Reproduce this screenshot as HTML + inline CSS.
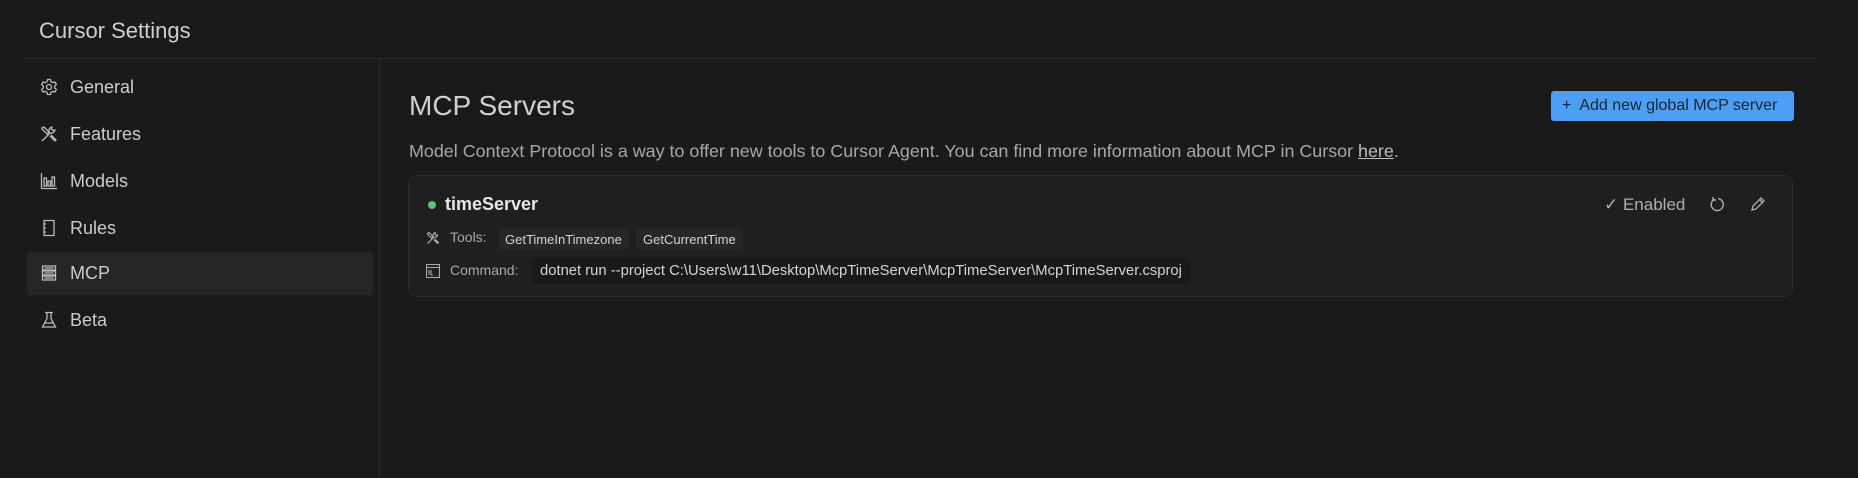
<!DOCTYPE html>
<html><head><meta charset="utf-8"><style>
*{margin:0;padding:0;box-sizing:border-box}
body{width:1858px;height:478px;background:#1a1a1a;font-family:"Liberation Sans",sans-serif;color:#cccccc;position:relative;overflow:hidden}
.abs{position:absolute;white-space:nowrap}
.title{left:39px;top:18px;font-size:22px;color:#cfcfcf}
.hline{left:21px;top:58px;width:1798px;height:1px;background:#2b2b2b}
.vline{left:379px;top:59px;width:1px;height:419px;background:#2b2b2b}
.nav{left:27px;width:346px;height:43px}
.nav.sel{background:#262626;border-radius:4px}
.nav svg{position:absolute;left:13px;top:12px}
.nav span{position:absolute;left:43px;top:11px;font-size:18px;color:#cccccc}
.h1{left:409px;top:90px;font-size:28px;color:#d0d0d0}
.desc{left:409px;top:141px;font-size:17.9px;color:#a8a8a8}
.desc u{color:#bdbdbd}
.btn{left:1551px;top:91px;width:243px;height:30px;background:#4d9ff5;border-radius:3px;color:#1c2430;font-size:16px;padding:6px 0 0 11px}
.card{left:408px;top:175px;width:1385px;height:122px;background:#1f1f1f;border:1px solid #2c2c2c;border-radius:8px}
.chip{background:#262626;border-radius:4px;font-size:13px;color:#d4d4d4;padding:4px 7px;height:22px}
</style></head><body>
<div class="abs title">Cursor Settings</div>
<div class="abs hline"></div>
<div class="abs vline"></div>

<div class="abs nav" style="top:66px"><svg width="18" height="18" viewBox="0 0 18 18" fill="none" stroke="#bbb" stroke-width="1.3"><circle cx="9" cy="9" r="2.5"/><path d="M7.5 1.5h3l.5 2.2 1.8 1 2.1-.8 1.5 2.6-1.7 1.5v2l1.7 1.5-1.5 2.6-2.1-.8-1.8 1-.5 2.2h-3l-.5-2.2-1.8-1-2.1.8-1.5-2.6 1.7-1.5v-2L1.6 6.5 3.1 3.9l2.1.8 1.8-1z"/></svg><span>General</span></div>
<div class="abs nav" style="top:113px"><svg width="18" height="18" viewBox="0 0 18 18" fill="none" stroke="#bbb" stroke-width="1.3"><path d="M2 16L10 8M12 2a4 4 0 0 0-3 5l1 1a4 4 0 0 0 5-3l-2 .5-1.5-1.5.5-2zM2 3l2-1 5 5-2 2-5-5zM10 11l5 5 1-1-5-5"/></svg><span>Features</span></div>
<div class="abs nav" style="top:160px"><svg width="18" height="18" viewBox="0 0 18 18" fill="none" stroke="#bbb" stroke-width="1.3"><path d="M1.5 1v15.5H17M4 6h2.5v8H4zM8 9h2.5v5H8zM12 5h2.5v9H12z"/></svg><span>Models</span></div>
<div class="abs nav" style="top:207px"><svg width="18" height="18" viewBox="0 0 18 18" fill="none" stroke="#bbb" stroke-width="1.3"><path d="M4 1.5h10v15H4zM4 5h2M4 9h2M4 13h2"/></svg><span>Rules</span></div>
<div class="abs nav sel" style="top:252px"><svg width="18" height="18" viewBox="0 0 18 18" fill="none" stroke="#bbb" stroke-width="1.3"><path d="M2.5 2h13v4h-13zM2.5 7h13v4h-13zM2.5 12h13v4h-13zM4.5 4h9M4.5 9h9M4.5 14h9"/></svg><span>MCP</span></div>
<div class="abs nav" style="top:299px"><svg width="18" height="18" viewBox="0 0 18 18" fill="none" stroke="#bbb" stroke-width="1.3"><path d="M5 1.5h8M7 1.5v6L2.5 16h13L11 7.5v-6M4.5 12h9"/></svg><span>Beta</span></div>

<div class="abs h1">MCP Servers</div>
<div class="abs btn">+&nbsp; Add new global MCP server</div>
<div class="abs desc">Model Context Protocol is a way to offer new tools to Cursor Agent. You can find more information about MCP in Cursor <u>here</u>.</div>

<div class="abs card"></div>
<div class="abs" style="left:428px;top:201px;width:8px;height:8px;border-radius:50%;background:#5fc27e"></div>
<div class="abs" style="left:445px;top:194px;font-size:18px;font-weight:bold;color:#e6e6e6">timeServer</div>
<div class="abs" style="left:1604px;top:195px;font-size:17px;color:#b0b0b0">✓ Enabled</div>
<svg class="abs" style="left:1709px;top:196px" width="17" height="17" viewBox="0 0 17 17" fill="none" stroke="#b0b0b0" stroke-width="1.4"><path d="M5 3.5A6 6 0 1 0 9 2.6M4 1v3h3"/></svg>
<svg class="abs" style="left:1749px;top:196px" width="17" height="17" viewBox="0 0 17 17" fill="none" stroke="#b0b0b0" stroke-width="1.3"><path d="M3 14l1-4 8-8 3 3-8 8zM10.5 3.5l3 3"/></svg>

<svg class="abs" style="left:426px;top:231px" width="14" height="14" viewBox="0 0 18 18" fill="none" stroke="#aaa" stroke-width="1.5"><path d="M2 16L10 8M12 2a4 4 0 0 0-3 5l1 1a4 4 0 0 0 5-3l-2 .5-1.5-1.5.5-2zM2 3l2-1 5 5-2 2-5-5zM10 11l5 5 1-1-5-5"/></svg>
<div class="abs" style="left:450px;top:229px;font-size:14px;color:#a8a8a8">Tools:</div>
<div class="abs chip" style="left:498px;top:228px">GetTimeInTimezone</div>
<div class="abs chip" style="left:636px;top:228px">GetCurrentTime</div>

<svg class="abs" style="left:426px;top:264px" width="14" height="14" viewBox="0 0 14 14" fill="none" stroke="#aaa" stroke-width="1.1"><rect x="0.5" y="0.5" width="13" height="13"/><path d="M0.5 3.5h13M3 6v5M5 6v5h2"/></svg>
<div class="abs" style="left:450px;top:262px;font-size:14px;color:#a8a8a8">Command:</div>
<div class="abs chip" style="left:532px;top:258px;height:26px;background:#191919;font-size:14.8px;padding:5px 8px">dotnet run --project C:\Users\w11\Desktop\McpTimeServer\McpTimeServer\McpTimeServer.csproj</div>
</body></html>
